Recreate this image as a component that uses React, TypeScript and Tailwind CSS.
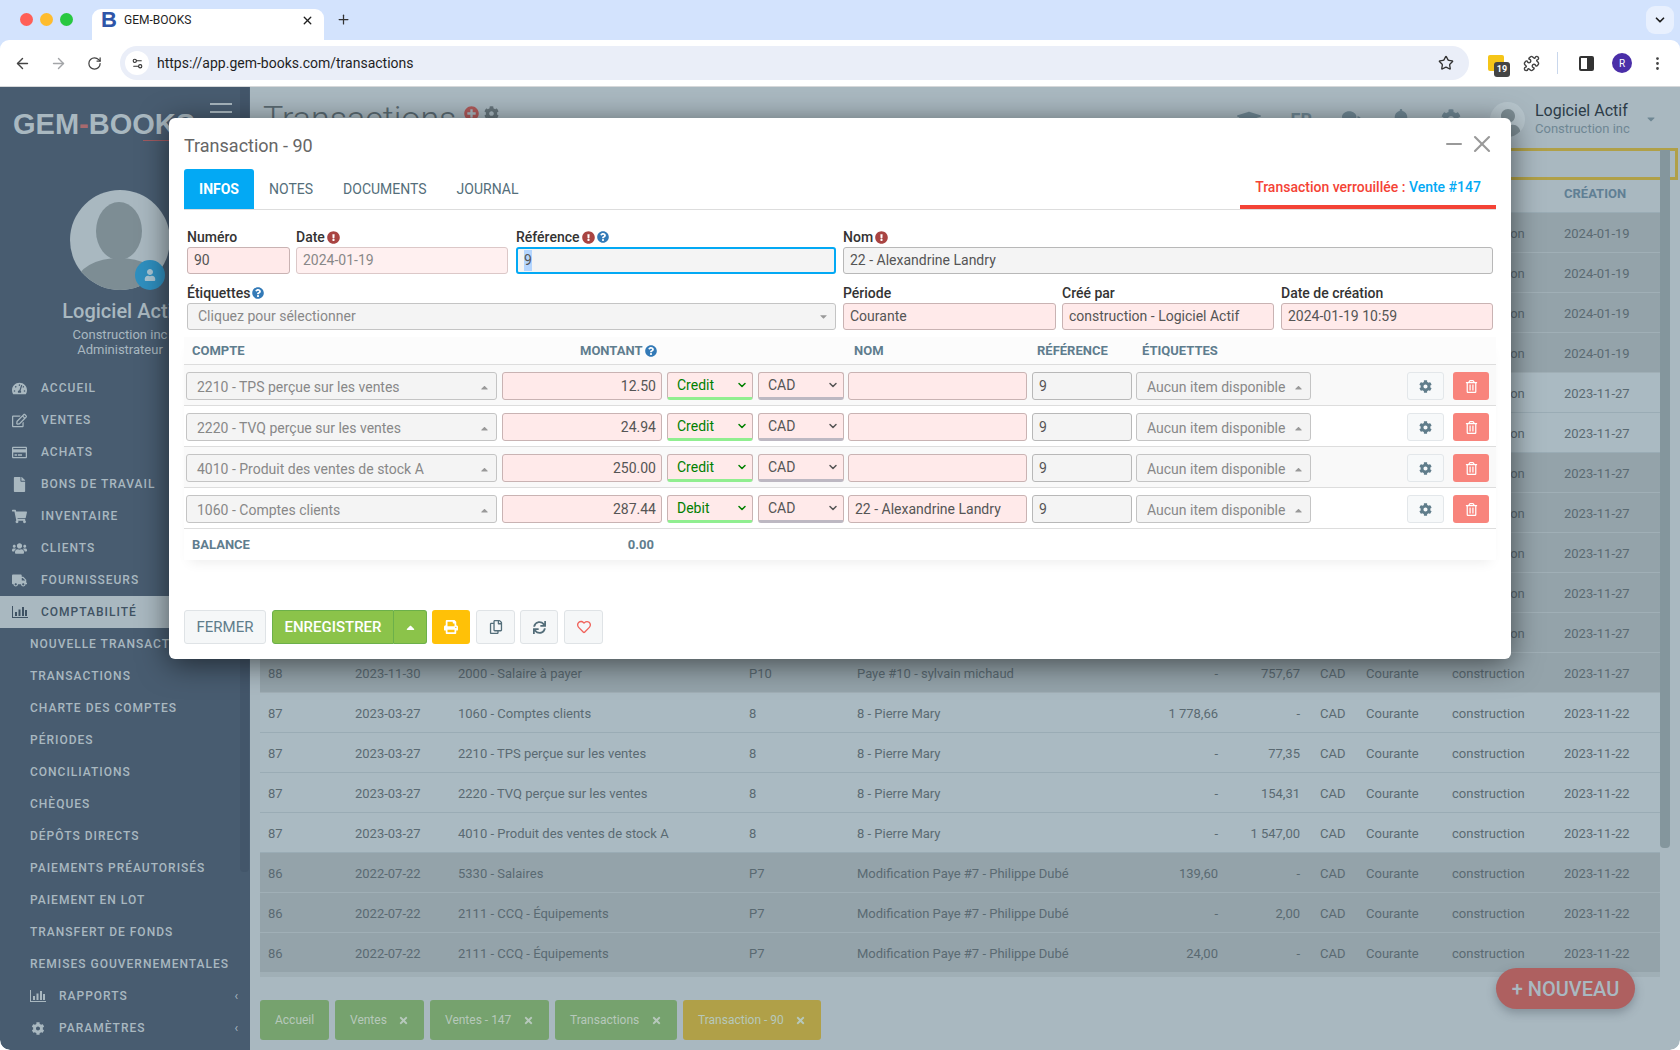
import type { ReactNode } from 'react';
import { ArrowLeft, ArrowRight, ChevronDown, EllipsisVertical, Minus, Plus, Puzzle, RotateCw, Settings2, Star, X } from 'lucide-react';
import {
  FaBell, FaCaretDown, FaCaretUp, FaCog, FaComments, FaExclamationCircle, FaFile, FaGraduationCap, FaPlusCircle,
  FaPrint, FaQuestionCircle, FaRegCopy, FaRegCreditCard, FaRegEdit, FaRegHeart, FaRegTrashAlt, FaShoppingCart,
  FaSync, FaTachometerAlt, FaTimes, FaTruck, FaUser, FaUsers,
} from 'react-icons/fa';

function BarChartIcon({ className }: { className?: string }) {
  return (
    <svg viewBox="0 0 16 12" className={className} fill="currentColor">
      <path d="M0 0h1v11h15v1H0z" />
      <path d="M3 6h2v4H3zM6.5 3.5h2V10h-2zM10 1h2v9h-2zM13 4h2v6h-2z" />
    </svg>
  );
}

function BrowserChrome() {
  return (
    <div className="shrink-0 bg-[#d3e3fd]">
      {/* Tab strip */}
      <div className="flex h-10 items-end pl-[92px] relative">
        <div className="absolute left-[20px] top-[13px] flex gap-[7px]">
          <span className="h-[13px] w-[13px] rounded-full bg-[#ff5f57]" />
          <span className="h-[13px] w-[13px] rounded-full bg-[#febc2e]" />
          <span className="h-[13px] w-[13px] rounded-full bg-[#28c840]" />
        </div>
        <div className="flex h-[31px] w-[232px] items-center rounded-t-[9px] bg-white pb-[9px] pl-[9px] pr-[10px]">
          <span className="w-[23px] font-['Liberation_Sans',sans-serif] text-[22px] font-bold leading-none text-[#2f55a8]">B</span>
          <span className="flex-1 text-[12px] text-[#1f1f1f]">GEM-BOOKS</span>
          <X size={13} strokeWidth={2.5} className="text-[#1f1f1f]" />
        </div>
        <Plus size={15} strokeWidth={2} className="mb-[13px] ml-[12px] text-[#333]" />
        <div className="absolute right-[6px] top-[6px] flex h-[28px] w-[28px] items-center justify-center rounded-[9px] bg-[#e8f0fe]">
          <ChevronDown size={14} strokeWidth={3} className="text-[#1f1f1f]" />
        </div>
      </div>
      {/* Toolbar */}
      <div className="flex h-[47px] items-center rounded-t-[9px] border-b border-[#d6d8da] bg-white">
        <div className="flex w-[120px] items-center pl-[14px] text-[#444]">
          <ArrowLeft size={17} />
          <ArrowRight size={17} className="ml-[19px] text-[#a3a5a8]" />
          <RotateCw size={15} className="ml-[20px]" />
        </div>
        <div className="flex h-[34px] w-[1349px] items-center rounded-full bg-[#eaeef8] pl-[5px] pr-[15px]">
          <div className="flex h-[24px] w-[24px] items-center justify-center rounded-full bg-white">
            <Settings2 size={13} className="text-[#333]" />
          </div>
          <span className="ml-[8px] flex-1 text-[14px] text-[#1f1f1f]">https://app.gem-books.com/transactions</span>
          <Star size={16} strokeWidth={2} className="text-[#333]" />
        </div>
        <div className="relative ml-[19px] h-[16px] w-[16px] rounded-[2px] bg-[#f5c518]">
          <span className="absolute left-[6px] top-[7px] flex h-[15px] w-[16px] items-center justify-center rounded-[3px] bg-[#444] text-[9px] font-bold text-white">19</span>
        </div>
        <Puzzle size={17} className="ml-[19px] text-[#444]" />
        <span className="ml-[17px] h-[22px] w-px bg-[#c9d7ec]" />
        <div className="ml-[21px] h-[15px] w-[15px] rounded-[2px] border-2 border-[#333] bg-gradient-to-r from-white from-50% to-[#333] to-50%" />
        <div className="ml-[18px] flex h-[20px] w-[20px] items-center justify-center rounded-full bg-[#4a2ea8] text-[10px] text-white">R</div>
        <EllipsisVertical size={17} className="ml-[17px] text-[#444]" />
      </div>
    </div>
  );
}

const mainNav: [ReactNode, string][] = [
  [<FaTachometerAlt />, 'ACCUEIL'],
  [<FaRegEdit />, 'VENTES'],
  [<FaRegCreditCard />, 'ACHATS'],
  [<FaFile />, 'BONS DE TRAVAIL'],
  [<FaShoppingCart />, 'INVENTAIRE'],
  [<FaUsers />, 'CLIENTS'],
  [<FaTruck />, 'FOURNISSEURS'],
];

const subNav = [
  'NOUVELLE TRANSACTION', 'TRANSACTIONS', 'CHARTE DES COMPTES', 'PÉRIODES', 'CONCILIATIONS', 'CHÈQUES',
  'DÉPÔTS DIRECTS', 'PAIEMENTS PRÉAUTORISÉS', 'PAIEMENT EN LOT', 'TRANSFERT DE FONDS', 'REMISES GOUVERNEMENTALES',
];

function Sidebar() {
  return (
    <aside className="relative flex w-[250px] shrink-0 flex-col overflow-hidden bg-[#485c70] text-[#a9b8c0]">
      {/* Scrollbar */}
      <div className="absolute right-[1px] top-0 h-[785px] w-[9px] rounded-b-[4px] bg-[#43566a]" />
      <div className="relative flex h-[60px] items-start pl-[13px] pt-[22px]">
        <div className="relative whitespace-nowrap font-['Liberation_Sans',sans-serif] text-[29px] font-bold leading-[30px]">
          GEM<span className="text-[#a86a6e]">-</span>BOOKS
          <span className="absolute left-[130px] top-[31px] h-[1px] w-[50px] bg-[#a05a60]" />
        </div>
        <div className="absolute left-[210px] top-[16px] flex w-[22px] flex-col gap-[6px]">
          <span className="h-[2px] bg-[#a9b8c0]" />
          <span className="h-[2px] bg-[#a9b8c0]" />
          <span className="h-[2px] bg-[#a9b8c0]" />
        </div>
      </div>
      <div className="relative ml-[70px] mt-[43px] h-[100px] w-[100px]">
        <svg viewBox="0 0 100 100" className="h-full w-full">
          <defs><clipPath id="av"><circle cx="50" cy="50" r="50" /></clipPath></defs>
          <g clipPath="url(#av)">
            <rect width="100" height="100" fill="#a9b8c0" />
            <ellipse cx="49" cy="41" rx="23" ry="29" fill="#7d8d94" />
            <ellipse cx="49" cy="92" rx="42" ry="24" fill="#7d8d94" />
          </g>
        </svg>
        <div className="absolute bottom-[0px] left-[65px] flex h-[30px] w-[30px] items-center justify-center rounded-full bg-[#2f8fbf] text-[12px] text-[#a9c4d2]">
          <FaUser />
        </div>
      </div>
      <div className="mt-[9px] whitespace-nowrap pl-[13px] pr-[21px] text-center text-[20px] font-medium leading-[24px]">Logiciel Actif</div>
      <div className="mt-[5px] pr-[10px] text-center text-[13px] leading-[14.5px]">
        <div>Construction inc</div>
        <div>Administrateur</div>
      </div>
      <nav className="mt-[15px] text-[12px] font-medium tracking-[1px]">
        {mainNav.map(([icon, label]) => (
          <div key={label} className="flex h-[32px] items-center pl-[12px]">
            <span className="flex w-[29px] text-[15px]">{icon}</span>
            {label}
          </div>
        ))}
        <div className="flex h-[32px] items-center bg-[#a9b8c0] pl-[12px] text-[#3f5263]">
          <BarChartIcon className="w-[16px]" />
          <span className="ml-[13px]">COMPTABILITÉ</span>
        </div>
        {subNav.map((label) => (
          <div key={label} className="flex h-[32px] items-center whitespace-nowrap pl-[30px]">{label}</div>
        ))}
        <div className="flex h-[32px] items-center pl-[30px] pr-[11px]">
          <BarChartIcon className="w-[16px]" />
          <span className="ml-[13px] flex-1">RAPPORTS</span>
          <span className="font-normal">‹</span>
        </div>
        <div className="flex h-[32px] items-center pl-[30px] pr-[11px]">
          <FaCog className="w-[16px] text-[13px]" />
          <span className="ml-[13px] flex-1">PARAMÈTRES</span>
          <span className="font-normal">‹</span>
        </div>
      </nav>
    </aside>
  );
}

type Row = {
  shade: 'dark' | 'light';
  cells?: [string, string, string, string, string, string, string];
  date: string;
};

const hiddenRow = (shade: 'dark' | 'light', date: string): Row => ({ shade, date });
const row87 = (account: string, debit: string, credit: string): Row => ({
  shade: 'light',
  cells: ['87', '2023-03-27', account, '8', '8 - Pierre Mary', debit, credit],
  date: '2023-11-22',
});
const row86 = (account: string, debit: string, credit: string): Row => ({
  shade: 'dark',
  cells: ['86', '2022-07-22', account, 'P7', 'Modification Paye #7 - Philippe Dubé', debit, credit],
  date: '2023-11-22',
});

const rows: Row[] = [
  hiddenRow('dark', '2024-01-19'),
  hiddenRow('dark', '2024-01-19'),
  hiddenRow('dark', '2024-01-19'),
  hiddenRow('dark', '2024-01-19'),
  hiddenRow('light', '2023-11-27'),
  hiddenRow('light', '2023-11-27'),
  hiddenRow('dark', '2023-11-27'),
  hiddenRow('dark', '2023-11-27'),
  hiddenRow('dark', '2023-11-27'),
  hiddenRow('dark', '2023-11-27'),
  hiddenRow('dark', '2023-11-27'),
  { shade: 'dark', cells: ['88', '2023-11-30', '2000 - Salaire à payer', 'P10', 'Paye #10 - sylvain michaud', '-', '757,67'], date: '2023-11-27' },
  row87('1060 - Comptes clients', '1 778,66', '-'),
  row87('2210 - TPS perçue sur les ventes', '-', '77,35'),
  row87('2220 - TVQ perçue sur les ventes', '-', '154,31'),
  row87('4010 - Produit des ventes de stock A', '-', '1 547,00'),
  row86('5330 - Salaires', '139,60', '-'),
  row86('2111 - CCQ - Équipements', '-', '2,00'),
  row86('2111 - CCQ - Équipements', '24,00', '-'),
];

function TableRow({ row }: { row: Row }) {
  const c = row.cells;
  return (
    <div
      className={`grid h-[40px] grid-cols-[95px_103px_291px_108px_273px_88px_82px_66px_86px_111px_97px] items-center border-b pt-[2px] text-[13px] text-[#5a6a72] ${
        row.shade === 'dark' ? 'border-[#a0afb6] bg-[#94a3aa]' : 'border-[#9aacb5] bg-[#aabac2]'
      }`}
    >
      <span className="pl-2">{c?.[0]}</span>
      <span>{c?.[1]}</span>
      <span>{c?.[2]}</span>
      <span>{c?.[3]}</span>
      <span>{c?.[4]}</span>
      <span className="text-right">{c?.[5]}</span>
      <span className="text-right">{c?.[6]}</span>
      <span className="pl-[20px]">{c && 'CAD'}</span>
      <span>{c && 'Courante'}</span>
      <span>construction</span>
      <span className="pl-[1px]">{row.date}</span>
    </div>
  );
}

const pageTabs = [
  { label: 'Accueil', w: 'w-[69px]', close: false, gold: false },
  { label: 'Ventes', w: 'w-[89px]', close: true, gold: false },
  { label: 'Ventes - 147', w: 'w-[119px]', close: true, gold: false },
  { label: 'Transactions', w: 'w-[122px]', close: true, gold: false },
  { label: 'Transaction - 90', w: 'w-[138px]', close: true, gold: true },
];

function MainContent() {
  return (
    <main className="relative flex-1 bg-[#a9b8c0]">
      <div className="flex h-[61px] items-start">
        <div className="ml-[13px] mt-[13px] text-[34px] font-light leading-[36px] text-[#5a6a72]">Transactions</div>
        <FaPlusCircle className="ml-[8px] mt-[19px] text-[15px] text-[#b05a5a]" />
        <FaCog className="ml-[5px] mt-[19px] text-[15px] text-[#66757c]" />
        <div className="ml-auto flex items-center pr-[23px] pt-[14px] text-[#6f8794]">
          <FaGraduationCap className="text-[24px]" />
          <span className="ml-[30px] text-[18px] font-bold">FR</span>
          <FaComments className="ml-[30px] text-[20px]" />
          <FaBell className="ml-[29px] text-[20px]" />
          <FaCog className="ml-[30px] text-[20px]" />
          <div className="relative ml-[29px] flex h-[35px] w-[35px] items-end justify-center overflow-hidden rounded-full bg-[#b7c5cc] text-[28px] text-[#7d8d94]">
            <FaUser />
          </div>
          <div className="ml-[10px] w-[110px]">
            <div className="text-[16px] leading-[20px] text-[#2c3c48]">Logiciel Actif</div>
            <div className="text-[13px] leading-[16px] text-[#6f8794]">Construction inc</div>
          </div>
          <FaCaretDown className="text-[12px]" />
        </div>
      </div>
      <div className="ml-[10px] mr-[2px] h-[32px] border-[3px] border-[#b0a048]" />
      <div className="relative ml-[10px] w-[1400px]">
        <div className="flex h-[33px] items-center justify-start border-b border-[#9aacb5] pb-[5px] pl-[1304px] text-[13px] font-bold text-[#607f94]">
          CRÉATION
        </div>
        {rows.map((row, i) => (
          <TableRow key={i} row={row} />
        ))}
        <div className="h-[4px] bg-[#a0afb6]" />
        <div className="absolute -right-[10px] -top-[30px] h-[698px] w-[10px] rounded-b-[4px] bg-[#84969d]" />
      </div>
      <div className="ml-[10px] mt-[23px] flex gap-[6px]">
        {pageTabs.map((tab) => (
          <div
            key={tab.label}
            className={`flex h-[40px] items-center justify-between rounded-[3px] px-[15px] text-[12px] text-[#b6c8bb] ${tab.w} ${
              tab.gold ? 'bg-[#b0a048]' : 'bg-[#76a26e]'
            }`}
          >
            {tab.label}
            {tab.close && <FaTimes className="text-[11px]" />}
          </div>
        ))}
      </div>
      <button className="absolute left-[1246px] top-[881px] flex h-[41px] w-[139px] items-center justify-center rounded-full bg-[#ae6060] text-[20px] font-medium text-[#a9b8c0] shadow-[0_4px_10px_rgba(60,70,80,0.35)]">
        + NOUVEAU
      </button>
    </main>
  );
}

const Warn = () => <FaExclamationCircle className="ml-[2px] text-[13px] text-[#a94442]" />;
const Help = () => <FaQuestionCircle className="ml-[2px] text-[12px] text-[#337ab7]" />;

function Label({ children }: { children: ReactNode }) {
  return <div className="flex h-[20px] items-center text-[14px] font-medium text-[#333]">{children}</div>;
}

const fieldStyles = {
  pink: 'border border-[#c9b3b3] bg-[#ffeaea] text-[#555]',
  pale: 'border border-[#dcc8c8] bg-[#fff0f0] text-[#888]',
  gray: 'border border-[#b8b8b8] bg-[#f4f4f4] text-[#555]',
  mute: 'border border-[#c4c4c4] bg-[#f4f4f4] text-[#888]',
  focus: 'border-2 border-[#03a9f4] bg-[#f4f4f4] text-[#555]',
};

function Field({ style, children, className = 'h-[27px] px-[6px]' }: { style: keyof typeof fieldStyles; children?: ReactNode; className?: string }) {
  return <div className={`flex items-center rounded-[3px] text-[14px] ${fieldStyles[style]} ${className}`}>{children}</div>;
}

function SelectBox({ value, green }: { value: string; green?: boolean }) {
  return (
    <div
      className={`flex h-[28px] w-[86px] items-center justify-between rounded-[3px] border border-b-[3px] border-[#c9b3b3] bg-[#ffeaea] pl-[9px] pr-[4px] text-[14px] ${
        green ? 'border-b-[#90ee90] text-[#008000]' : 'border-b-[#bdb8c2] text-[#555]'
      }`}
    >
      {value}
      <ChevronDown size={12} strokeWidth={3} />
    </div>
  );
}

const lines = [
  { account: '2210 - TPS perçue sur les ventes', amount: '12.50', side: 'Credit', name: '' },
  { account: '2220 - TVQ perçue sur les ventes', amount: '24.94', side: 'Credit', name: '' },
  { account: '4010 - Produit des ventes de stock A', amount: '250.00', side: 'Credit', name: '' },
  { account: '1060 - Comptes clients', amount: '287.44', side: 'Debit', name: '22 - Alexandrine Landry' },
];

function TransactionDialog() {
  return (
    <div className="absolute left-[169px] top-[118px] h-[541px] w-[1342px] rounded-[6px] bg-white px-[15px] shadow-[0_5px_30px_rgba(0,0,0,0.55)]">
      <div className="flex h-[51px] items-start justify-between pt-[16px]">
        <div className="text-[18px] leading-[24px] text-[#666]">Transaction - 90</div>
        <div className="-mt-[4px] flex items-center gap-[2px] text-[#999]">
          <Minus size={24} strokeWidth={2} />
          <X size={28} strokeWidth={1.8} />
        </div>
      </div>

      {/* Tabs */}
      <div className="flex h-[41px] items-stretch border-b border-[#ddd] text-[14px] text-[#546e7a]">
        <div className="flex w-[70px] items-center justify-center rounded-t-[3px] bg-[#03a9f4] font-bold text-white">INFOS</div>
        <div className="ml-[15px] flex items-center">NOTES</div>
        <div className="ml-[30px] flex items-center">DOCUMENTS</div>
        <div className="ml-[30px] flex items-center">JOURNAL</div>
        <div className="ml-auto flex w-[256px] items-start justify-center border-b-4 border-[#f44336] pt-[8px] font-medium">
          <span className="text-[#f44336]">Transaction verrouillée :&nbsp;</span>
          <span className="text-[#03a9f4]">Vente #147</span>
        </div>
      </div>

      {/* Form */}
      <div className="pl-[3px] pr-[3px] pt-[17px]">
        <div className="flex">
          <div className="w-[103px]">
            <Label>Numéro</Label>
            <Field style="pink">90</Field>
          </div>
          <div className="ml-[6px] w-[212px]">
            <Label>Date<Warn /></Label>
            <Field style="pale">2024-01-19</Field>
          </div>
          <div className="ml-[8px] w-[320px]">
            <Label>Référence<Warn /><Help /></Label>
            <Field style="focus">
              <span className="bg-[#b4d5fe]">9</span>
            </Field>
          </div>
          <div className="ml-[7px] flex-1">
            <Label>Nom<Warn /></Label>
            <Field style="gray">22 - Alexandrine Landry</Field>
          </div>
        </div>
        <div className="mt-[9px] flex">
          <div className="w-[649px]">
            <Label>Étiquettes<Help /></Label>
            <Field style="mute" className="h-[27px] justify-between border-[#b8b8b8] pl-[10px] pr-[6px]">
              Cliquez pour sélectionner
              <FaCaretDown className="text-[11px] text-[#999]" />
            </Field>
          </div>
          <div className="ml-[7px] w-[213px]">
            <Label>Période</Label>
            <Field style="pink">Courante</Field>
          </div>
          <div className="ml-[6px] w-[212px]">
            <Label>Créé par</Label>
            <Field style="pink">construction - Logiciel Actif</Field>
          </div>
          <div className="ml-[7px] flex-1">
            <Label>Date de création</Label>
            <Field style="pink">2024-01-19 10:59</Field>
          </div>
        </div>
      </div>

      {/* Lines */}
      <div className="mt-[7px] shadow-[0_8px_12px_-6px_rgba(0,0,0,0.08)]">
        <div className="flex h-[28px] items-center border-b border-[#ddd] bg-[#fcfcfc] text-[13px] font-bold text-[#5f7d8e]">
          <span className="ml-[8px] w-[388px]">COMPTE</span>
          <span className="flex w-[274px] items-center">MONTANT<Help /></span>
          <span className="w-[183px]">NOM</span>
          <span className="w-[105px]">RÉFÉRENCE</span>
          <span>ÉTIQUETTES</span>
        </div>
        {lines.map((line, i) => (
          <div key={line.account} className={`flex h-[41px] border-b border-[#ddd] pl-[2px] pt-[7px] ${i % 2 === 0 ? 'bg-[#f9f9f9]' : 'bg-white'}`}>
            <Field style="mute" className="h-[28px] w-[311px] justify-between pl-[10px] pr-[6px] pt-[2px]">
              {line.account}
              <FaCaretUp className="text-[11px] text-[#999]" />
            </Field>
            <Field style="pink" className="ml-[5px] h-[28px] w-[160px] justify-end pr-[5px]">{line.amount}</Field>
            <div className="ml-[5px]"><SelectBox value={line.side} green /></div>
            <div className="ml-[5px]"><SelectBox value="CAD" /></div>
            <Field style="pink" className="ml-[4px] h-[28px] w-[179px] px-[6px]">{line.name}</Field>
            <Field style="gray" className="ml-[5px] h-[28px] w-[100px] px-[6px]">9</Field>
            <Field style="mute" className="ml-[4px] h-[28px] w-[175px] justify-between pl-[10px] pr-[6px] pt-[2px]">
              Aucun item disponible
              <FaCaretUp className="text-[11px] text-[#999]" />
            </Field>
            <button className="ml-[96px] flex h-[28px] w-[37px] items-center justify-center rounded-[3px] border border-[#e3e7ea] bg-[#f7f9fa] text-[13px] text-[#607d8b]">
              <FaCog />
            </button>
            <button className="ml-[9px] flex h-[28px] w-[36px] items-center justify-center rounded-[3px] bg-[#f8847c] text-[13px] text-white">
              <FaRegTrashAlt />
            </button>
          </div>
        ))}
        <div className="flex h-[31px] items-center text-[13px] font-bold text-[#5f7d8e]">
          <span className="ml-[8px] w-[425px]">BALANCE</span>
          <span className="w-[37px] text-right">0.00</span>
        </div>
      </div>

      {/* Footer */}
      <div className="mt-[50px] flex h-[34px] text-[15px]">
        <button className="w-[82px] rounded-[3px] border border-[#dfe3e6] bg-[#f5f7f8] text-[#607d8b]">FERMER</button>
        <button className="ml-[6px] w-[122px] rounded-l-[3px] border border-[#6cb04a] bg-[#8bc34a] font-medium text-white">ENREGISTRER</button>
        <button className="flex w-[33px] items-center justify-center rounded-r-[3px] border border-l-0 border-[#6cb04a] bg-[#8bc34a] text-[13px] text-white">
          <FaCaretUp />
        </button>
        <button className="ml-[5px] flex w-[38px] items-center justify-center rounded-[3px] bg-[#ffc107] text-[14px] text-white"><FaPrint /></button>
        <button className="ml-[6px] flex w-[39px] items-center justify-center rounded-[3px] border border-[#dfe3e6] bg-[#f5f7f8] text-[14px] text-[#546e7a]"><FaRegCopy /></button>
        <button className="ml-[5px] flex w-[38px] items-center justify-center rounded-[3px] border border-[#dfe3e6] bg-[#f5f7f8] text-[13px] text-[#546e7a]"><FaSync /></button>
        <button className="ml-[6px] flex w-[39px] items-center justify-center rounded-[3px] border border-[#dfe3e6] bg-[#f5f7f8] text-[14px] text-[#f0625a]"><FaRegHeart /></button>
      </div>
    </div>
  );
}

export default function App() {
  return (
    <div className="relative flex h-[1050px] flex-col overflow-hidden rounded-b-[10px] bg-white font-[Roboto,sans-serif]">
      <BrowserChrome />
      <div className="flex flex-1 overflow-hidden rounded-b-[10px]">
        <Sidebar />
        <MainContent />
      </div>
      <TransactionDialog />
    </div>
  );
}
